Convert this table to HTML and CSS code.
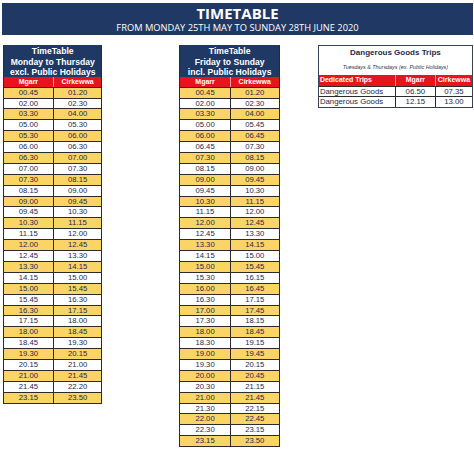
FILE: index.html
```html
<!DOCTYPE html>
<html>
<head>
<meta charset="utf-8">
<link rel="stylesheet" href="styles.css">
</head>
<body>
<div class="page">
  <div class="banner">
    <div class="banner-title">TIMETABLE</div>
    <div class="banner-sub">FROM MONDAY 25TH MAY TO SUNDAY 28TH JUNE 2020</div>
  </div>
  <div class="content">
    <div class="tt tt1">
      <div class="tt-head">TimeTable<br>Monday to Thursday<br>excl. Public Holidays</div>
      <div class="tt-cols"><span>Mgarr</span><span>Cirkewwa</span></div>
      <div class="row y"><span>00.45</span><span>01.20</span></div>
      <div class="row"><span>02.00</span><span>02.30</span></div>
      <div class="row y"><span>03.30</span><span>04.00</span></div>
      <div class="row"><span>05.00</span><span>05.30</span></div>
      <div class="row y"><span>05.30</span><span>06.00</span></div>
      <div class="row"><span>06.00</span><span>06.30</span></div>
      <div class="row y"><span>06.30</span><span>07.00</span></div>
      <div class="row"><span>07.00</span><span>07.30</span></div>
      <div class="row y"><span>07.30</span><span>08.15</span></div>
      <div class="row"><span>08.15</span><span>09.00</span></div>
      <div class="row y"><span>09.00</span><span>09.45</span></div>
      <div class="row"><span>09.45</span><span>10.30</span></div>
      <div class="row y"><span>10.30</span><span>11.15</span></div>
      <div class="row"><span>11.15</span><span>12.00</span></div>
      <div class="row y"><span>12.00</span><span>12.45</span></div>
      <div class="row"><span>12.45</span><span>13.30</span></div>
      <div class="row y"><span>13.30</span><span>14.15</span></div>
      <div class="row"><span>14.15</span><span>15.00</span></div>
      <div class="row y"><span>15.00</span><span>15.45</span></div>
      <div class="row"><span>15.45</span><span>16.30</span></div>
      <div class="row y"><span>16.30</span><span>17.15</span></div>
      <div class="row"><span>17.15</span><span>18.00</span></div>
      <div class="row y"><span>18.00</span><span>18.45</span></div>
      <div class="row"><span>18.45</span><span>19.30</span></div>
      <div class="row y"><span>19.30</span><span>20.15</span></div>
      <div class="row"><span>20.15</span><span>21.00</span></div>
      <div class="row y"><span>21.00</span><span>21.45</span></div>
      <div class="row"><span>21.45</span><span>22.20</span></div>
      <div class="row y"><span>23.15</span><span>23.50</span></div>
    </div>
    <div class="tt tt2">
      <div class="tt-head">TimeTable<br>Friday to Sunday<br>incl. Public Holidays</div>
      <div class="tt-cols"><span>Mgarr</span><span>Cirkewwa</span></div>
      <div class="row y"><span>00.45</span><span>01.20</span></div>
      <div class="row"><span>02.00</span><span>02.30</span></div>
      <div class="row y"><span>03.30</span><span>04.00</span></div>
      <div class="row"><span>05.00</span><span>05.45</span></div>
      <div class="row y"><span>06.00</span><span>06.45</span></div>
      <div class="row"><span>06.45</span><span>07.30</span></div>
      <div class="row y"><span>07.30</span><span>08.15</span></div>
      <div class="row"><span>08.15</span><span>09.00</span></div>
      <div class="row y"><span>09.00</span><span>09.45</span></div>
      <div class="row"><span>09.45</span><span>10.30</span></div>
      <div class="row y"><span>10.30</span><span>11.15</span></div>
      <div class="row"><span>11.15</span><span>12.00</span></div>
      <div class="row y"><span>12.00</span><span>12.45</span></div>
      <div class="row"><span>12.45</span><span>13.30</span></div>
      <div class="row y"><span>13.30</span><span>14.15</span></div>
      <div class="row"><span>14.15</span><span>15.00</span></div>
      <div class="row y"><span>15.00</span><span>15.45</span></div>
      <div class="row"><span>15.30</span><span>16.15</span></div>
      <div class="row y"><span>16.00</span><span>16.45</span></div>
      <div class="row"><span>16.30</span><span>17.15</span></div>
      <div class="row y"><span>17.00</span><span>17.45</span></div>
      <div class="row"><span>17.30</span><span>18.15</span></div>
      <div class="row y"><span>18.00</span><span>18.45</span></div>
      <div class="row"><span>18.30</span><span>19.15</span></div>
      <div class="row y"><span>19.00</span><span>19.45</span></div>
      <div class="row"><span>19.30</span><span>20.15</span></div>
      <div class="row y"><span>20.00</span><span>20.45</span></div>
      <div class="row"><span>20.30</span><span>21.15</span></div>
      <div class="row y"><span>21.00</span><span>21.45</span></div>
      <div class="row"><span>21.30</span><span>22.15</span></div>
      <div class="row y"><span>22.00</span><span>22.45</span></div>
      <div class="row"><span>22.30</span><span>23.15</span></div>
      <div class="row y"><span>23.15</span><span>23.50</span></div>
    </div>
    <div class="dg">
      <div class="dg-title">Dangerous Goods Trips</div>
      <div class="dg-note">Tuesdays &amp; Thursdays (ex. Public Holidays)</div>
      <div class="dg-row dg-head"><span class="dg-name">Dedicated Trips</span><span>Mgarr</span><span>Cirkewwa</span></div>
      <div class="dg-row"><span class="dg-name">Dangerous Goods</span><span>06.50</span><span>07.35</span></div>
      <div class="dg-row"><span class="dg-name">Dangerous Goods</span><span>12.15</span><span>13.00</span></div>
    </div>
  </div>
</div>
</body>
</html>
```

FILE: styles.css
```css
html, body {
  margin: 0;
  padding: 0;
  background: #ffffff;
}
body {
  font-family: "Liberation Sans", Arial, sans-serif;
}
.page {
  padding: 3px 1px 0 2px;
}
.banner {
  height: 32px;
  background: #203864;
  color: #ffffff;
  text-align: center;
  font-family: "Open Sans", "Liberation Sans", sans-serif;
  box-sizing: border-box;
  padding-top: 2px;
}
.banner-title {
  font-size: 15px;
  font-weight: 700;
  line-height: 16px;
}
.banner-sub {
  font-size: 9.3px;
  line-height: 11px;
  margin-top: 1px;
}
.content {
  display: flex;
  align-items: flex-start;
  margin-top: 10px;
  padding-left: 1px;
}
.tt {
  border: 1px solid #2b2b2b;
  border-top: none;
}
.tt1 {
  width: 98px;
  margin-right: 77px;
}
.tt2 {
  width: 99px;
  margin-right: 38px;
}
.tt-head {
  background: #203864;
  color: #ffffff;
  font-weight: 700;
  font-size: 8.6px;
  line-height: 10.6px;
  text-align: center;
  height: 32px;
  box-sizing: border-box;
  padding-top: 1px;
}
.tt-cols {
  display: grid;
  grid-template-columns: 1fr 1fr;
  background: #e8141b;
  color: #ffffff;
  font-weight: 700;
  font-size: 7px;
  height: 9.7px;
  line-height: 9.7px;
  text-align: center;
}
.tt-cols span + span {
  border-left: 1px solid #f3a0a0;
}
.row {
  display: grid;
  grid-template-columns: 1fr 1fr;
  height: 10.9px;
  box-sizing: border-box;
  border-top: 1px solid #2b2b2b;
  font-size: 7.7px;
  line-height: 9.9px;
  color: #1c2a4c;
  text-align: center;
  background: #ffffff;
}
.row.y {
  background: #fbd466;
}
.row span + span {
  border-left: 1px solid #2b2b2b;
}
.dg {
  width: 156px;
  border: 1px solid #3a4050;
  box-sizing: border-box;
}
.dg-title {
  font-weight: 700;
  font-size: 8px;
  color: #1c2a4c;
  text-align: center;
  padding-top: 1px;
  line-height: 11px;
}
.dg-note {
  font-style: italic;
  font-size: 5.4px;
  color: #2a3550;
  text-align: center;
  line-height: 9px;
  margin-top: 5px;
  margin-bottom: 3px;
}
.dg-row {
  display: grid;
  grid-template-columns: 76px 40px 1fr;
  height: 10.6px;
  line-height: 10px;
  font-size: 7.8px;
  color: #1c2a4c;
  text-align: center;
  border-top: 1px solid #2b2b2b;
  box-sizing: border-box;
}
.dg-row span + span {
  border-left: 1px solid #2b2b2b;
}
.dg-name {
  text-align: left;
  padding-left: 1px;
}
.dg-head {
  background: #e8141b;
  color: #ffffff;
  font-weight: 700;
  font-size: 7px;
  border-top: none;
}
.dg-head span + span {
  border-left: 1px solid #f3a0a0;
}
```
